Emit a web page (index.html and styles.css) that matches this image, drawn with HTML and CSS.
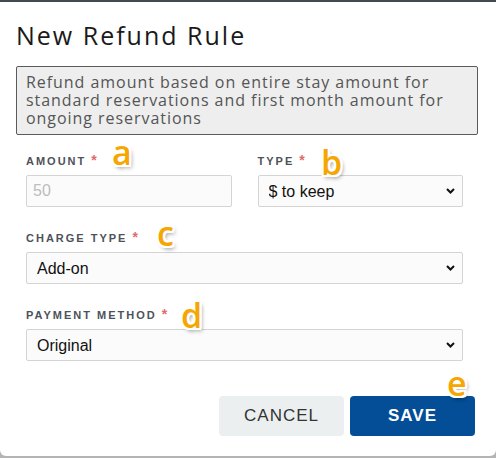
FILE: index.html
```html
<!DOCTYPE html>
<html lang="en">
<head>
<meta charset="utf-8">
<title>New Refund Rule</title>
<link rel="stylesheet" href="styles.css">
</head>
<body>
<div class="page">
  <div class="topbar"></div>
  <div class="dialog">
    <h1 class="title">New Refund Rule</h1>
    <div class="desc">Refund amount based on entire stay amount for standard reservations and first month amount for ongoing reservations</div>
    <form class="form">
      <div class="row two">
        <div class="field">
          <label class="label">Amount <span class="req">*</span></label>
          <input class="control input" type="text" placeholder="50">
        </div>
        <div class="field">
          <label class="label">Type <span class="req">*</span></label>
          <div class="select-wrap">
            <select class="control select"><option>$ to keep</option></select>
            <svg class="chev" width="9" height="6" viewBox="0 0 9 6"><path d="M1 1l3.5 3.5L8 1" fill="none" stroke="#111" stroke-width="2"/></svg>
          </div>
        </div>
      </div>
      <div class="row">
        <div class="field">
          <label class="label">Charge Type <span class="req">*</span></label>
          <div class="select-wrap">
            <select class="control select"><option>Add-on</option></select>
            <svg class="chev" width="9" height="6" viewBox="0 0 9 6"><path d="M1 1l3.5 3.5L8 1" fill="none" stroke="#111" stroke-width="2"/></svg>
          </div>
        </div>
      </div>
      <div class="row">
        <div class="field">
          <label class="label">Payment Method <span class="req">*</span></label>
          <div class="select-wrap">
            <select class="control select"><option>Original</option></select>
            <svg class="chev" width="9" height="6" viewBox="0 0 9 6"><path d="M1 1l3.5 3.5L8 1" fill="none" stroke="#111" stroke-width="2"/></svg>
          </div>
        </div>
      </div>
    </form>
    <div class="actions">
      <button class="btn btn-cancel" type="button">CANCEL</button>
      <button class="btn btn-save" type="button">SAVE</button>
    </div>
  </div>
  <span class="mark mark-a">a</span>
  <span class="mark mark-b">b</span>
  <span class="mark mark-c">c</span>
  <span class="mark mark-d">d</span>
  <span class="mark mark-e">e</span>
</div>
</body>
</html>
```

FILE: styles.css
```css
* { box-sizing: border-box; }
html, body { margin: 0; padding: 0; }
body {
  width: 496px;
  height: 458px;
  overflow: hidden;
  background: #b4b4b4;
  font-family: "Open Sans", "Liberation Sans", sans-serif;
}
.page {
  position: relative;
  width: 496px;
  height: 458px;
  display: flex;
  flex-direction: column;
}
.topbar {
  height: 2px;
  background: #434951;
}
.dialog {
  height: 454px;
  background: #fff;
  border-radius: 0 0 6px 6px;
  padding: 0 18px 0 16px;
}
.title {
  margin: 18px 0 0 0;
  font-family: "Open Sans", sans-serif;
  font-weight: 400;
  font-size: 25px;
  line-height: 30px;
  letter-spacing: 2px;
  color: #1a1a1a;
}
.desc {
  margin-top: 16px;
  border: 1px solid #5a5a5a;
  border-radius: 2px;
  background: #eeeeee;
  padding: 6px 10px 7px 9px;
  font-family: "Open Sans", sans-serif;
  font-size: 16px;
  line-height: 18px;
  letter-spacing: 0.95px;
  color: #555;
}
.form {
  margin: 18px 15px 0 10px;
  display: flex;
  flex-direction: column;
  gap: 23px;
}
.row.two {
  display: grid;
  grid-template-columns: 1fr 1fr;
  gap: 26px;
}
.field {
  display: flex;
  flex-direction: column;
}
.label {
  font-family: "Liberation Sans", Arial, sans-serif;
  font-weight: 700;
  font-size: 11px;
  line-height: 14px;
  height: 14px;
  letter-spacing: 2px;
  text-transform: uppercase;
  color: #4d525a;
  margin-bottom: 8px;
}
.req {
  color: #e06b6b;
  font-size: 14px;
  line-height: 14px;
}
.control {
  width: 100%;
  height: 32px;
  border: 1px solid #d4d4d4;
  border-radius: 2px;
  background: #fbfbfb;
  font-family: "Liberation Sans", Arial, sans-serif;
  font-size: 16px;
  color: #111;
  margin: 0;
  outline: none;
}
.input { padding: 0 6px; }
.input::placeholder { color: #bdbdbd; }
.select-wrap { position: relative; }
.select {
  appearance: none;
  -webkit-appearance: none;
  padding: 0 30px 0 10px;
}
.chev {
  position: absolute;
  right: 8px;
  top: 13px;
  pointer-events: none;
}
.actions {
  display: flex;
  justify-content: flex-end;
  gap: 6px;
  margin: 35px 3px 0 0;
}
.btn {
  width: 125px;
  height: 40px;
  border: none;
  border-radius: 4px;
  font-family: "Liberation Sans", Arial, sans-serif;
  font-size: 17px;
  letter-spacing: 1px;
  cursor: pointer;
}
.btn-cancel { background: #eceff0; color: #333; }
.btn-save { background: #034e96; color: #fff; font-weight: 700; }
.mark {
  position: absolute;
  font-family: "Open Sans", sans-serif;
  font-weight: 600;
  font-size: 34px;
  line-height: 34px;
  color: #f6a600;
  text-shadow:
    -2px -2px 0 #fff, 2px -2px 0 #fff, -2px 2px 0 #fff, 2px 2px 0 #fff,
    0 -2px 0 #fff, 0 2px 0 #fff, -2px 0 0 #fff, 2px 0 0 #fff,
    2px 3px 4px rgba(0,0,0,0.45);
}
.mark-a { left: 112px; top: 135px; }
.mark-b { left: 321px; top: 145px; }
.mark-c { left: 157px; top: 216px; }
.mark-d { left: 181px; top: 298px; }
.mark-e { left: 447px; top: 366px; }
```
